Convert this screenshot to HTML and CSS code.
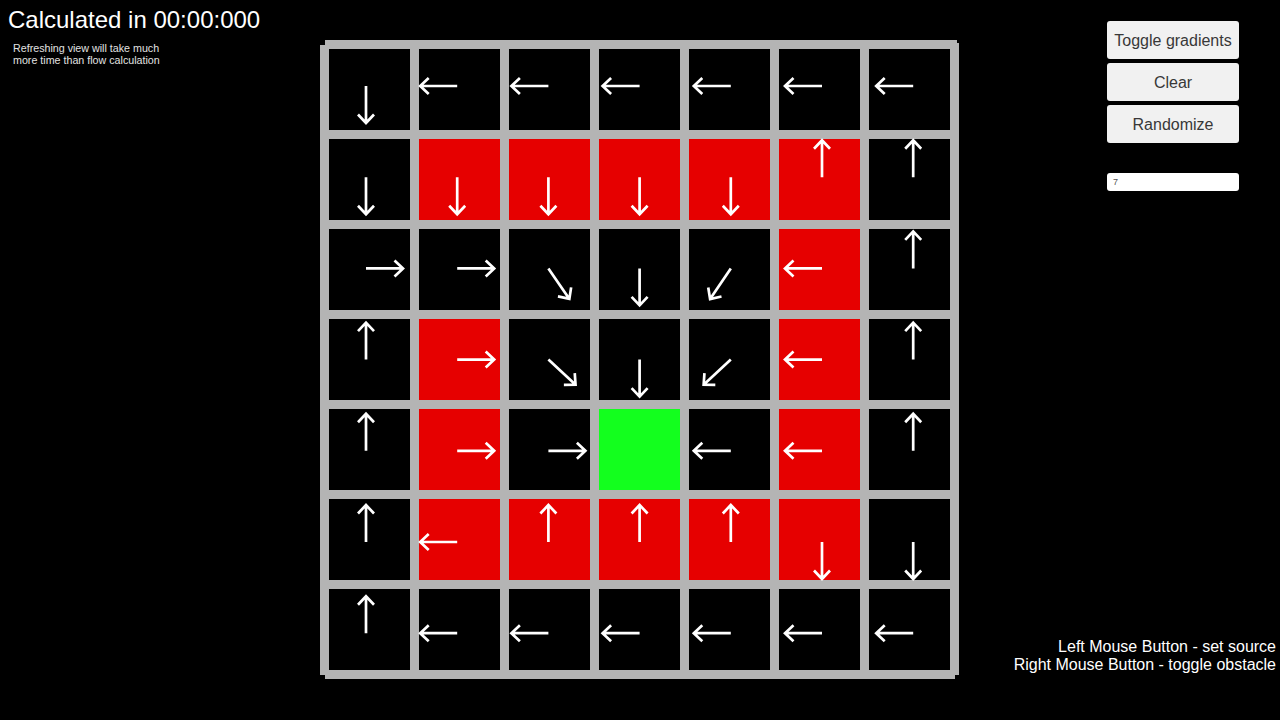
FILE: index.html
```html
<!DOCTYPE html>
<html>
<head>
<meta charset="utf-8">
<title>Flow field</title>
<link rel="stylesheet" href="styles.css">
</head>
<body>
<svg class="sprite" aria-hidden="true"><defs><path id="ar" d="M0 0H37M28.5 -8L37 0L28.5 8" fill="none" stroke="#fff" stroke-width="2.7"/></defs></svg>
<div class="page">
  <div class="info">
    <h1 class="title">Calculated in 00:00:000</h1>
    <p class="note">Refreshing view will take much<br>more time than flow calculation</p>
  </div>

  <div class="board">
    <!-- row 0 -->
    <div class="cell"><svg viewBox="0 0 81 81"><use href="#ar" transform="translate(37 37) rotate(90)"/></svg></div>
    <div class="cell"><svg viewBox="0 0 81 81"><use href="#ar" transform="translate(38.2 37) rotate(180)"/></svg></div>
    <div class="cell"><svg viewBox="0 0 81 81"><use href="#ar" transform="translate(39.4 37) rotate(180)"/></svg></div>
    <div class="cell"><svg viewBox="0 0 81 81"><use href="#ar" transform="translate(40.6 37) rotate(180)"/></svg></div>
    <div class="cell"><svg viewBox="0 0 81 81"><use href="#ar" transform="translate(41.8 37) rotate(180)"/></svg></div>
    <div class="cell"><svg viewBox="0 0 81 81"><use href="#ar" transform="translate(43 37) rotate(180)"/></svg></div>
    <div class="cell"><svg viewBox="0 0 81 81"><use href="#ar" transform="translate(44.2 37) rotate(180)"/></svg></div>
    <!-- row 1 -->
    <div class="cell"><svg viewBox="0 0 81 81"><use href="#ar" transform="translate(37 38.2) rotate(90)"/></svg></div>
    <div class="cell red"><svg viewBox="0 0 81 81"><use href="#ar" transform="translate(38.2 38.2) rotate(90)"/></svg></div>
    <div class="cell red"><svg viewBox="0 0 81 81"><use href="#ar" transform="translate(39.4 38.2) rotate(90)"/></svg></div>
    <div class="cell red"><svg viewBox="0 0 81 81"><use href="#ar" transform="translate(40.6 38.2) rotate(90)"/></svg></div>
    <div class="cell red"><svg viewBox="0 0 81 81"><use href="#ar" transform="translate(41.8 38.2) rotate(90)"/></svg></div>
    <div class="cell red"><svg viewBox="0 0 81 81"><use href="#ar" transform="translate(43 38.2) rotate(-90)"/></svg></div>
    <div class="cell"><svg viewBox="0 0 81 81"><use href="#ar" transform="translate(44.2 38.2) rotate(-90)"/></svg></div>
    <!-- row 2 -->
    <div class="cell"><svg viewBox="0 0 81 81"><use href="#ar" transform="translate(37 39.4)"/></svg></div>
    <div class="cell"><svg viewBox="0 0 81 81"><use href="#ar" transform="translate(38.2 39.4)"/></svg></div>
    <div class="cell"><svg viewBox="0 0 81 81"><use href="#ar" transform="translate(39.4 39.4) rotate(55.5)"/></svg></div>
    <div class="cell"><svg viewBox="0 0 81 81"><use href="#ar" transform="translate(40.6 39.4) rotate(90)"/></svg></div>
    <div class="cell"><svg viewBox="0 0 81 81"><use href="#ar" transform="translate(41.8 39.4) rotate(124)"/></svg></div>
    <div class="cell red"><svg viewBox="0 0 81 81"><use href="#ar" transform="translate(43 39.4) rotate(180)"/></svg></div>
    <div class="cell"><svg viewBox="0 0 81 81"><use href="#ar" transform="translate(44.2 39.4) rotate(-90)"/></svg></div>
    <!-- row 3 -->
    <div class="cell"><svg viewBox="0 0 81 81"><use href="#ar" transform="translate(37 40.6) rotate(-90)"/></svg></div>
    <div class="cell red"><svg viewBox="0 0 81 81"><use href="#ar" transform="translate(38.2 40.6)"/></svg></div>
    <div class="cell"><svg viewBox="0 0 81 81"><use href="#ar" transform="translate(39.4 40.6) rotate(42.8)"/></svg></div>
    <div class="cell"><svg viewBox="0 0 81 81"><use href="#ar" transform="translate(40.6 40.6) rotate(90)"/></svg></div>
    <div class="cell"><svg viewBox="0 0 81 81"><use href="#ar" transform="translate(41.8 40.6) rotate(137.2)"/></svg></div>
    <div class="cell red"><svg viewBox="0 0 81 81"><use href="#ar" transform="translate(43 40.6) rotate(180)"/></svg></div>
    <div class="cell"><svg viewBox="0 0 81 81"><use href="#ar" transform="translate(44.2 40.6) rotate(-90)"/></svg></div>
    <!-- row 4 -->
    <div class="cell"><svg viewBox="0 0 81 81"><use href="#ar" transform="translate(37 41.8) rotate(-90)"/></svg></div>
    <div class="cell red"><svg viewBox="0 0 81 81"><use href="#ar" transform="translate(38.2 41.8)"/></svg></div>
    <div class="cell"><svg viewBox="0 0 81 81"><use href="#ar" transform="translate(39.4 41.8)"/></svg></div>
    <div class="cell green"></div>
    <div class="cell"><svg viewBox="0 0 81 81"><use href="#ar" transform="translate(41.8 41.8) rotate(180)"/></svg></div>
    <div class="cell red"><svg viewBox="0 0 81 81"><use href="#ar" transform="translate(43 41.8) rotate(180)"/></svg></div>
    <div class="cell"><svg viewBox="0 0 81 81"><use href="#ar" transform="translate(44.2 41.8) rotate(-90)"/></svg></div>
    <!-- row 5 -->
    <div class="cell"><svg viewBox="0 0 81 81"><use href="#ar" transform="translate(37 43) rotate(-90)"/></svg></div>
    <div class="cell red"><svg viewBox="0 0 81 81"><use href="#ar" transform="translate(38.2 43) rotate(180)"/></svg></div>
    <div class="cell red"><svg viewBox="0 0 81 81"><use href="#ar" transform="translate(39.4 43) rotate(-90)"/></svg></div>
    <div class="cell red"><svg viewBox="0 0 81 81"><use href="#ar" transform="translate(40.6 43) rotate(-90)"/></svg></div>
    <div class="cell red"><svg viewBox="0 0 81 81"><use href="#ar" transform="translate(41.8 43) rotate(-90)"/></svg></div>
    <div class="cell red"><svg viewBox="0 0 81 81"><use href="#ar" transform="translate(43 43) rotate(90)"/></svg></div>
    <div class="cell"><svg viewBox="0 0 81 81"><use href="#ar" transform="translate(44.2 43) rotate(90)"/></svg></div>
    <!-- row 6 -->
    <div class="cell"><svg viewBox="0 0 81 81"><use href="#ar" transform="translate(37 44.2) rotate(-90)"/></svg></div>
    <div class="cell"><svg viewBox="0 0 81 81"><use href="#ar" transform="translate(38.2 44.2) rotate(180)"/></svg></div>
    <div class="cell"><svg viewBox="0 0 81 81"><use href="#ar" transform="translate(39.4 44.2) rotate(180)"/></svg></div>
    <div class="cell"><svg viewBox="0 0 81 81"><use href="#ar" transform="translate(40.6 44.2) rotate(180)"/></svg></div>
    <div class="cell"><svg viewBox="0 0 81 81"><use href="#ar" transform="translate(41.8 44.2) rotate(180)"/></svg></div>
    <div class="cell"><svg viewBox="0 0 81 81"><use href="#ar" transform="translate(43 44.2) rotate(180)"/></svg></div>
    <div class="cell"><svg viewBox="0 0 81 81"><use href="#ar" transform="translate(44.2 44.2) rotate(180)"/></svg></div>
  </div>

  <div class="side">
    <div class="controls">
      <button class="btn">Toggle gradients</button>
      <button class="btn">Clear</button>
      <button class="btn">Randomize</button>
      <input class="field" type="text" value="7">
    </div>
    <div class="help">Left Mouse Button - set source<br>Right Mouse Button - toggle obstacle</div>
  </div>
</div>
</body>
</html>
```

FILE: styles.css
```css
html, body {
  margin: 0;
  padding: 0;
  background: #000;
  font-family: "Liberation Sans", Arial, sans-serif;
}

.sprite {
  display: block;
  width: 0;
  height: 0;
  overflow: hidden;
}

.page {
  display: grid;
  grid-template-columns: 320px 639px 1fr;
  height: 720px;
  overflow: hidden;
}

.info {
  padding: 6px 0 0 8px;
  color: #fff;
}

.title {
  margin: 0;
  font-size: 24px;
  font-weight: normal;
  line-height: 28px;
  white-space: nowrap;
}

.note {
  margin: 8px 0 0 5px;
  font-size: 10.7px;
  line-height: 12px;
  color: #e2e2e2;
}

.board {
  align-self: start;
  margin-top: 40px;
  display: grid;
  grid-template-columns: repeat(7, 81px);
  grid-auto-rows: 81px;
  gap: 9px;
  padding: 9px;
  background: #b4b4b4;
  clip-path: polygon(5px 0, calc(100% - 2px) 0, calc(100% - 2px) 3px, 100% 3px,
    100% calc(100% - 4px), calc(100% - 4px) calc(100% - 4px), calc(100% - 4px) 100%,
    5px 100%, 5px calc(100% - 4px), 0 calc(100% - 4px), 0 5px, 5px 5px);
}

.cell {
  background: #000;
}

.cell.red {
  background: #e60000;
}

.cell.green {
  background: #13ff1e;
}

.cell svg {
  display: block;
  width: 81px;
  height: 81px;
  overflow: visible;
}

.side {
  display: flex;
  flex-direction: column;
  justify-content: space-between;
  align-items: flex-end;
  padding: 21px 4px 46px 0;
}

.controls {
  width: 132px;
  margin-right: 37px;
  display: flex;
  flex-direction: column;
  gap: 4px;
}

.btn {
  height: 38px;
  border: none;
  border-radius: 3px;
  background: #f1f1f1;
  color: #383838;
  font-family: "Liberation Sans", Arial, sans-serif;
  font-size: 16px;
  padding: 2px 0 0;
}

.field {
  margin-top: 26px;
  height: 18px;
  box-sizing: border-box;
  border: none;
  border-radius: 3px;
  background: #fff;
  color: #555;
  font-family: "Liberation Sans", Arial, sans-serif;
  font-size: 9px;
  padding: 0 6px;
  outline: none;
}

.help {
  color: #fff;
  font-size: 16px;
  line-height: 18px;
  text-align: right;
  white-space: nowrap;
}
```
